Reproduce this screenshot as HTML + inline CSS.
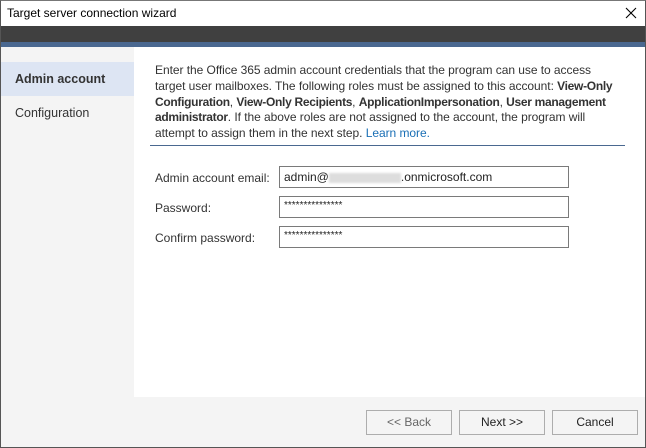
<!DOCTYPE html>
<html><head><style>
*{margin:0;padding:0;box-sizing:border-box}
body{width:646px;height:448px;overflow:hidden;font-family:"Liberation Sans",sans-serif;font-size:12px;color:#222;background:#f4f4f4;position:relative}
.win{position:absolute;left:0;top:0;width:646px;height:448px;border:1px solid #555;border-top-color:#777}
.a{position:absolute}
.title{left:1px;top:1px;width:644px;height:25px;background:#fff}
.title span{position:absolute;left:6px;top:5px;font-size:12px;color:#000}
.inp{position:absolute;left:279px;width:290px;height:22px;border:1px solid #7a7a7a;background:#fff;padding:3px 4px;font-size:12px}
.btn{position:absolute;top:410px;height:25px;border:1px solid #adadad;background:#f4f4f4;text-align:center;line-height:23px;font-size:12px;color:#222}
.lbl{position:absolute;left:155px;font-size:12px;color:#333}
b{font-weight:bold;color:#333;letter-spacing:-0.3px}
</style></head><body><div class="win"></div>
<div class="a title"><span>Target server connection wizard</span>
<svg class="a" style="left:624px;top:6px" width="12" height="12"><path d="M1 1L11 11M11 1L1 11" stroke="#000" stroke-width="1.1"/></svg></div>
<div class="a" style="left:1px;top:26px;width:644px;height:16px;background:#404040"></div>
<div class="a" style="left:1px;top:42px;width:644px;height:5px;background:#4a6890"></div>
<div class="a" style="left:134px;top:47px;width:511px;height:350px;background:#fff"></div>
<div class="a" style="left:1px;top:62px;width:133px;height:34px;background:#dde5f3"></div>
<div class="a" style="left:15px;top:72px;font-weight:bold;font-size:12.5px;color:#333">Admin account</div>
<div class="a" style="left:15px;top:106px;font-size:12.5px;color:#333">Configuration</div>
<div class="a" style="left:155px;top:63px;white-space:nowrap;line-height:15.8px;font-size:12px;color:#333;letter-spacing:-0.05px">Enter the Office 365 admin account credentials that the program can use to access<br>target user mailboxes. The following roles must be assigned to this account: <b>View-Only</b><br><b>Configuration</b>, <b>View-Only Recipients</b>, <b>ApplicationImpersonation</b>, <b>User management</b><br><b>administrator</b>. If the above roles are not assigned to the account, the program will<br>attempt to assign them in the next step. <span style="color:#1a6fb5">Learn more.</span></div>
<div class="a" style="left:150px;top:145px;width:475px;height:1px;background:#4a6890"></div>
<div class="lbl" style="top:171px">Admin account email:</div>
<div class="lbl" style="top:201px">Password:</div>
<div class="lbl" style="top:231px">Confirm password:</div>
<div class="inp" style="top:166px">admin@<span style="display:inline-block;width:72px;height:10px;background:#ddd;vertical-align:middle;filter:blur(1px)"></span>.onmicrosoft.com</div>
<div class="inp" style="top:196px;font-size:10px">***************</div>
<div class="inp" style="top:226px;font-size:10px">***************</div>
<div class="btn" style="left:366px;width:86px;color:#666">&lt;&lt; Back</div>
<div class="btn" style="left:459px;width:86px">Next &gt;&gt;</div>
<div class="btn" style="left:552px;width:86px">Cancel</div>
</body></html>
